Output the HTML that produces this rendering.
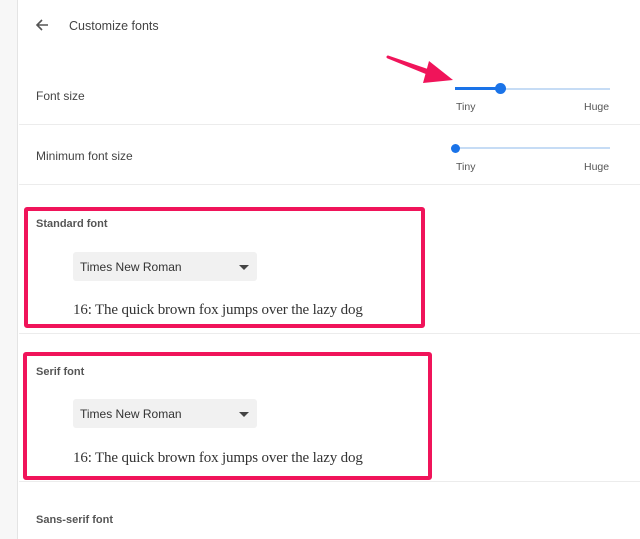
<!DOCTYPE html>
<html><head><style>
body{margin:0;width:640px;height:539px;background:#fff;font-family:"Liberation Sans",sans-serif;position:relative;overflow:hidden;color:#333}
.abs{position:absolute}
.side{left:0;top:0;width:17px;height:539px;background:#f7f7f7;border-right:1px solid #e4e4e4}
.t{font-size:12px;color:#444}
.hr{left:19px;right:0;height:1px;background:#ececec}
.sel{background:#f1f1f1;border-radius:3px;width:184px;height:29px}
.sel span{position:absolute;left:7px;top:8px;font-size:12px;color:#333}
.sel i{position:absolute;right:8px;top:13px;border-left:5px solid transparent;border-right:5px solid transparent;border-top:5px solid #444}
.serif{font-family:"Liberation Serif",serif;font-size:15px;color:#333;letter-spacing:-0.15px}
.box{border:4px solid #f0145a;border-radius:3px;box-sizing:border-box}
.small{font-size:10.5px;color:#555}
.lb{font-size:11px;font-weight:bold;color:#555}
</style></head><body>
<div class="abs side"></div>
<svg class="abs" style="left:34px;top:17px" width="16" height="16" viewBox="0 0 16 16"><path d="M14 8H3M8 3L3 8l5 5" stroke="#555" stroke-width="1.6" fill="none"/></svg>
<div class="abs t" style="left:69px;top:19px;font-size:12.5px">Customize fonts</div>

<svg class="abs" style="left:385px;top:52px" width="75" height="35"><path d="M3 5 L50 21 L52 25 Z" fill="#f0145a" stroke="#f0145a" stroke-width="3" stroke-linejoin="round"/><polygon points="44,9 68,28 38,31" fill="#f0145a"/></svg>

<div class="abs t" style="left:36px;top:89px">Font size</div>
<div class="abs" style="left:455px;top:88px;width:155px;height:2px;background:#c6dcf5"></div>
<div class="abs" style="left:455px;top:87px;width:45px;height:3px;background:#1a73e8"></div>
<div class="abs" style="left:495px;top:83px;width:11px;height:11px;border-radius:50%;background:#1a73e8"></div>
<div class="abs small" style="left:456px;top:101px">Tiny</div>
<div class="abs small" style="left:584px;top:101px">Huge</div>
<div class="abs hr" style="top:124px"></div>

<div class="abs t" style="left:36px;top:149px">Minimum font size</div>
<div class="abs" style="left:455px;top:147px;width:155px;height:2px;background:#c6dcf5"></div>
<div class="abs" style="left:451px;top:144px;width:9px;height:9px;border-radius:50%;background:#1a73e8"></div>
<div class="abs small" style="left:456px;top:161px">Tiny</div>
<div class="abs small" style="left:584px;top:161px">Huge</div>
<div class="abs hr" style="top:184px"></div>

<div class="abs box" style="left:24px;top:207px;width:401px;height:121px"></div>
<div class="abs lb" style="left:36px;top:218px">Standard font</div>
<div class="abs sel" style="left:73px;top:252px"><span>Times New Roman</span><i></i></div>
<div class="abs serif" style="left:73px;top:302px">16: The quick brown fox jumps over the lazy dog</div>
<div class="abs hr" style="top:333px"></div>

<div class="abs box" style="left:23px;top:352px;width:409px;height:128px"></div>
<div class="abs lb" style="left:36px;top:366px">Serif font</div>
<div class="abs sel" style="left:73px;top:399px"><span>Times New Roman</span><i></i></div>
<div class="abs serif" style="left:73px;top:450px">16: The quick brown fox jumps over the lazy dog</div>
<div class="abs hr" style="top:481px"></div>

<div class="abs lb" style="left:36px;top:514px">Sans-serif font</div>
</body></html>
